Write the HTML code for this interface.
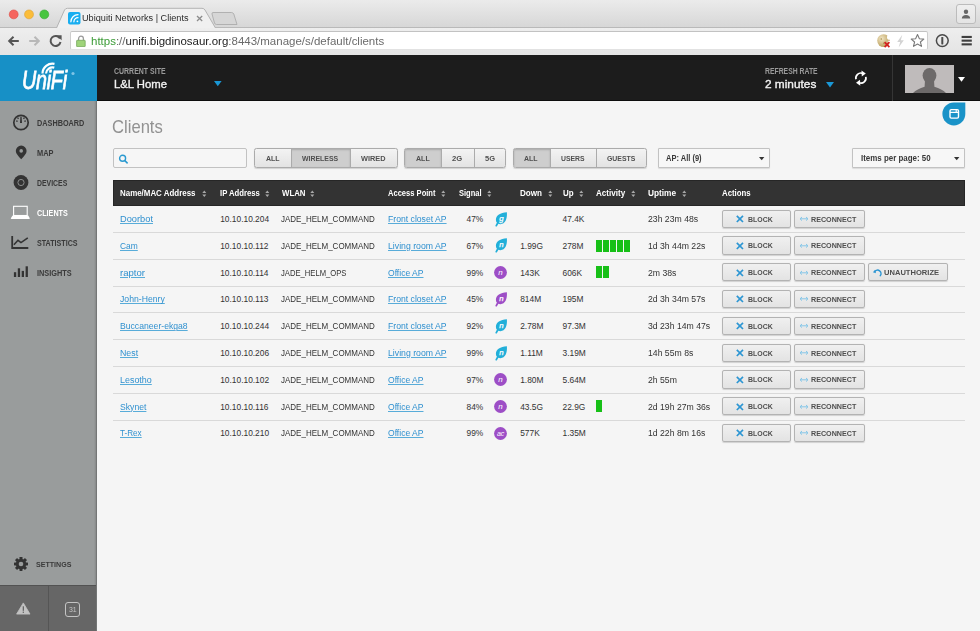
<!DOCTYPE html><html><head><meta charset="utf-8"><style>
html,body{margin:0;padding:0;width:980px;height:631px;overflow:hidden;background:#f5f5f5;}
body{position:relative;font-family:"Liberation Sans",sans-serif;}
.t{position:absolute;white-space:nowrap;line-height:1;transform-origin:0 0;}
.r{position:absolute;}
</style></head><body>
<div class="r" style="left:0px;top:0px;width:980px;height:27px;background:linear-gradient(#ebebeb,#d7d7d7);"></div>
<div class="r" style="left:0px;top:27px;width:980px;height:1px;background:#b9b9b9;"></div>
<div class="r" style="left:0px;top:28px;width:980px;height:27px;background:linear-gradient(#eeeeee,#e4e4e4);"></div>
<svg class="r" style="left:0;top:0" width="56" height="26"><circle cx="13.7" cy="14.4" r="4.45" fill="#f5655e" stroke="#dc4b45" stroke-width="0.6"/><circle cx="29" cy="14.4" r="4.45" fill="#fbbd3a" stroke="#dda02e" stroke-width="0.6"/><circle cx="44.3" cy="14.4" r="4.45" fill="#48c540" stroke="#33a62e" stroke-width="0.6"/></svg>
<svg class="r" style="left:0;top:0" width="260" height="28"><path d="M56.5 28 L64.5 10 Q65.5 8.3 67.5 8.3 L202 8.3 Q204 8.3 205 10 L215.5 28" fill="#f0f0f0" stroke="#b3b3b3" stroke-width="1"/><rect x="0" y="28" width="260" height="1" fill="#f0f0f0"/><path d="M213 12.5 L231.5 12.5 Q233 12.5 233.8 14 L237 24.5 L216.5 24.5 Q215 24.5 214.5 23 L212 14 Q211.8 12.5 213 12.5Z" fill="#d6d6d6" stroke="#a6a6a6" stroke-width="0.8"/></svg>
<svg class="r" style="left:68px;top:12px" width="13" height="13" viewBox="0 0 13 13"><rect x="0" y="0" width="12.5" height="12.5" rx="2" fill="#19aef0"/><g fill="none" stroke="#fff" stroke-width="1.25" stroke-linecap="round"><path d="M2.9 9.8 A7.1 7.1 0 0 1 10 2.7"/><path d="M5.9 9.8 A4.1 4.1 0 0 1 10 5.7"/></g><circle cx="9.4" cy="9.3" r="0.9" fill="#fff"/></svg>
<div class="t" style="left:82.20px;top:13.92px;font-size:9.08px;color:#2a2a2a;transform:scaleX(1.0068);">Ubiquiti Networks | Clients</div>
<svg class="r" style="left:196px;top:15px" width="8" height="7"><path d="M1 1 L6.2 6 M6.2 1 L1 6" stroke="#8c8c8c" stroke-width="1.3"/></svg>
<div class="r" style="left:956.3px;top:4.2px;width:19.5px;height:20px;border:1px solid #bcbcbc;border-radius:3px;box-sizing:border-box;background:linear-gradient(#efefef,#e4e4e4);"></div>
<svg class="r" style="left:959px;top:7px" width="14" height="14"><circle cx="7" cy="4.8" r="2.2" fill="#666"/><path d="M2.8 11.5 Q3 8 7 8 Q11 8 11.2 11.5Z" fill="#666"/></svg>
<svg class="r" style="left:0;top:27px" width="70" height="27"><g fill="none" stroke-width="2" stroke-linecap="butt"><path d="M18.8 14 H9.5 M13.5 9.8 L9.2 14 L13.5 18.2" stroke="#555"/><path d="M29.2 14 H38.5 M34.5 9.8 L38.8 14 L34.5 18.2" stroke="#b8b8b8"/><path d="M60 11.5 A5 5 0 1 0 60.5 15" stroke="#555"/></g><path d="M56.5 8.2 L61.6 8.2 L61.6 13.3Z" fill="#555"/></svg>
<div class="r" style="left:70px;top:30.6px;width:857.5px;height:19.8px;background:#fff;border:1px solid #cdcdcd;border-top-color:#c2c2c2;border-bottom-color:#e2e2e2;border-radius:2px;box-sizing:border-box;"></div>
<svg class="r" style="left:76px;top:35px" width="10" height="12"><path d="M2.6 5.5 V3.6 A2.4 2.4 0 0 1 7.4 3.6 V5.5" fill="none" stroke="#9a9a9a" stroke-width="1.3"/><rect x="0.6" y="5.3" width="8.6" height="6.4" rx="0.6" fill="#9fd47a" stroke="#6b9f52" stroke-width="0.7"/></svg>
<div class="t" style="left:91.4px;top:35.5px;font-size:11.2px;color:#6a6a6a;transform:scaleX(1.027);transform-origin:0 0;white-space:nowrap;"><span style="color:#3a9b35">https</span>://<span style="color:#222">unifi.bigdinosaur.org</span>:8443/manage/s/default/clients</div>
<svg class="r" style="left:876px;top:33px" width="104" height="16"><defs><radialGradient id="ck" cx="0.35" cy="0.35" r="0.7"><stop offset="0" stop-color="#f1e6c6"/><stop offset="1" stop-color="#b99b55"/></radialGradient><mask id="bite"><rect width="20" height="16" fill="#fff"/><circle cx="13.6" cy="4.2" r="2.6" fill="#000"/><circle cx="13.2" cy="9" r="1.6" fill="#000"/></mask></defs><circle cx="7.6" cy="7.6" r="6.4" fill="url(#ck)" mask="url(#bite)"/><circle cx="5.3" cy="6" r="0.8" fill="#a58a4a"/><circle cx="7.8" cy="10.2" r="0.7" fill="#a58a4a"/><path d="M8.6 9.2 L13.4 14.2 M13.4 9.2 L8.6 14.2" stroke="#d42020" stroke-width="1.7"/><path d="M26.3 1.8 L21.2 9 L24.2 9 L22.6 14.6 L27.8 7.2 L24.8 7.2 Z" fill="#d3d3d3"/><path d="M41.5 1.6 L43.4 5.7 L47.8 6.1 L44.4 9.0 L45.5 13.4 L41.5 11.0 L37.5 13.4 L38.6 9.0 L35.2 6.1 L39.6 5.7Z" fill="#fff" stroke="#7a7a7a" stroke-width="1.1" stroke-linejoin="round"/><circle cx="66.3" cy="7.6" r="5.9" fill="none" stroke="#4a4a4a" stroke-width="1.5"/><rect x="65.3" y="4" width="2" height="7.4" rx="0.6" fill="#4a4a4a"/><rect x="85.6" y="2.9" width="10.2" height="2.1" fill="#3f3f3f"/><rect x="85.6" y="6.6" width="10.2" height="2.1" fill="#3f3f3f"/><rect x="85.6" y="10.3" width="10.2" height="2.1" fill="#3f3f3f"/></svg>
<div class="r" style="left:0px;top:55px;width:97px;height:46px;background:#1790c6;"></div>
<div class="r" style="left:97px;top:55px;width:883px;height:46px;background:#1c1c1c;"></div>
<div class="r" style="left:97px;top:100px;width:883px;height:1px;background:#0d0d0d;"></div>
<div class="r" style="left:892px;top:55px;width:1px;height:46px;background:#353535;"></div>
<div class="t" style="left:21.50px;top:68.36px;font-size:24.86px;color:#fff;transform:scaleX(0.7929);font-style:italic;-webkit-text-stroke:0.8px #fff;letter-spacing:-0.3px;">UniFi</div>
<svg class="r" style="left:36px;top:60px" width="45" height="20"><g fill="none" stroke="#fff" stroke-width="2.2"><path d="M6.5 13.5 A10 10 0 0 1 18.5 3.8"/><path d="M10 13.5 A6.5 6.5 0 0 1 18.3 7.6"/></g><circle cx="37" cy="13.5" r="1.6" fill="#7fc4e6"/></svg>
<div class="t" style="left:114.40px;top:66.59px;font-size:8.52px;color:#9a9a9a;font-weight:bold;transform:scaleX(0.8197);">CURRENT SITE</div>
<div class="t" style="left:114.20px;top:78.82px;font-size:11.31px;color:#f2f2f2;-webkit-text-stroke:0.35px #f2f2f2;transform:scaleX(1.0013);">L&amp;L Home</div>
<svg class="r" style="left:213.8px;top:81.3px" width="9" height="6"><path d="M0 0 H7.6 L3.8 5.2Z" fill="#1a97d5"/></svg>
<div class="t" style="left:765.30px;top:66.59px;font-size:8.52px;color:#9a9a9a;font-weight:bold;transform:scaleX(0.8029);">REFRESH RATE</div>
<div class="t" style="left:765.00px;top:78.62px;font-size:11.31px;color:#f2f2f2;-webkit-text-stroke:0.35px #f2f2f2;transform:scaleX(1.0480);">2 minutes</div>
<svg class="r" style="left:826px;top:82px" width="9" height="6"><path d="M0 0 H8 L4 5.4Z" fill="#1a97d5"/></svg>
<svg class="r" style="left:853px;top:70px" width="16" height="17"><g transform="translate(7.9 8.1)" fill="#fff"><g id="ra"><path d="M-4.9 1.2 A5 5 0 0 1 1.8 -4.7" fill="none" stroke="#fff" stroke-width="1.7"/><path d="M0.6 -7.6 L4.9 -4.6 L0.9 -1.7Z"/></g><g transform="rotate(180)"><path d="M-4.9 1.2 A5 5 0 0 1 1.8 -4.7" fill="none" stroke="#fff" stroke-width="1.7"/><path d="M0.6 -7.6 L4.9 -4.6 L0.9 -1.7Z"/></g></g></svg>
<svg class="r" style="left:905px;top:65px" width="49" height="28"><rect width="49" height="28" fill="#bfbbbb"/><ellipse cx="24.5" cy="10.6" rx="6.9" ry="7.6" fill="#6d6a6a"/><path d="M8 28 Q12 24 19.6 21.8 L20 15 H29 L29.4 21.8 Q37 24 41 28Z" fill="#6d6a6a"/></svg>
<svg class="r" style="left:958px;top:76.5px" width="8" height="6"><path d="M0 0 H7 L3.5 4.8Z" fill="#fff"/></svg>
<div class="r" style="left:0px;top:101px;width:97px;height:530px;background:#999c9c;"></div>
<div class="r" style="left:94px;top:101px;width:2px;height:484px;background:linear-gradient(90deg,#999c9c,#868888);"></div>
<div class="r" style="left:96px;top:101px;width:1px;height:530px;background:#747676;"></div>
<div class="r" style="left:0px;top:585px;width:96px;height:46px;background:#666;"></div>
<div class="r" style="left:0px;top:585px;width:96px;height:1px;background:#525252;"></div>
<div class="r" style="left:48px;top:586px;width:1px;height:45px;background:#555;"></div>
<div class="t" style="left:36.60px;top:119.92px;font-size:8.24px;color:#3a3a3a;font-weight:bold;transform:scaleX(0.8850);">DASHBOARD</div>
<div class="t" style="left:36.60px;top:150.22px;font-size:8.24px;color:#3a3a3a;font-weight:bold;transform:scaleX(0.9011);">MAP</div>
<div class="t" style="left:36.60px;top:179.82px;font-size:8.24px;color:#3a3a3a;font-weight:bold;transform:scaleX(0.8376);">DEVICES</div>
<div class="t" style="left:36.60px;top:209.52px;font-size:8.24px;color:#fff;font-weight:bold;transform:scaleX(0.8737);">CLIENTS</div>
<div class="t" style="left:36.60px;top:239.52px;font-size:8.24px;color:#3a3a3a;font-weight:bold;transform:scaleX(0.8667);">STATISTICS</div>
<div class="t" style="left:36.60px;top:269.52px;font-size:8.24px;color:#3a3a3a;font-weight:bold;transform:scaleX(0.8917);">INSIGHTS</div>
<div class="t" style="left:36.20px;top:560.58px;font-size:7.82px;color:#3a3a3a;font-weight:bold;transform:scaleX(0.9077);">SETTINGS</div>
<svg class="r" style="left:0;top:101px" width="40" height="190"><circle cx="21" cy="21.5" r="7.2" fill="none" stroke="#333" stroke-width="1.7"/><path d="M20 22 L20.4 15.8 H21.6 L22 22Z" fill="#333"/><g stroke="#333" stroke-width="1.3"><path d="M16.2 19.8 L17.6 20.3"/><path d="M25.8 19.8 L24.4 20.3"/><path d="M17.6 16.6 L18.5 17.8"/><path d="M24.4 16.6 L23.5 17.8"/></g><path d="M21.2 58.3 C18.2 54.8 15.8 52.6 15.8 50 A5.4 5.4 0 0 1 26.6 50 C26.6 52.6 24.2 54.8 21.2 58.3Z" fill="#333"/><circle cx="21.2" cy="49.9" r="1.8" fill="#999c9c"/><circle cx="21" cy="81.5" r="7.4" fill="#333"/><circle cx="21" cy="81.5" r="3.1" fill="none" stroke="#8a8c8c" stroke-width="1.0"/><rect x="13.6" y="105.3" width="13.6" height="9.2" fill="none" stroke="#fff" stroke-width="1.1"/><path d="M12.6 114.6 H28.2 L29.8 117.2 Q29.8 118 29 118 H11.6 Q10.8 118 10.8 117.2Z" fill="#fff"/><path d="M12.2 135 V147 H28.3" fill="none" stroke="#333" stroke-width="1.8"/><path d="M13.9 143.8 L18 139.3 L21 141.6 L27.8 136.8" fill="none" stroke="#333" stroke-width="1.6"/><rect x="13.9" y="171.2" width="2.3" height="4.8" fill="#333"/><rect x="17.8" y="167.3" width="2.3" height="8.7" fill="#333"/><rect x="21.7" y="169.9" width="2.3" height="6.1" fill="#333"/><rect x="25.6" y="165.3" width="2.3" height="10.7" fill="#333"/></svg>
<svg class="r" style="left:14.3px;top:556.7px" width="14" height="14" viewBox="-7 -7 14 14"><g fill="#333"><rect x="-1.5" y="-7.0" width="3.0" height="2.8" rx="0.4" transform="rotate(0)"/><rect x="-1.5" y="-7.0" width="3.0" height="2.8" rx="0.4" transform="rotate(45)"/><rect x="-1.5" y="-7.0" width="3.0" height="2.8" rx="0.4" transform="rotate(90)"/><rect x="-1.5" y="-7.0" width="3.0" height="2.8" rx="0.4" transform="rotate(135)"/><rect x="-1.5" y="-7.0" width="3.0" height="2.8" rx="0.4" transform="rotate(180)"/><rect x="-1.5" y="-7.0" width="3.0" height="2.8" rx="0.4" transform="rotate(225)"/><rect x="-1.5" y="-7.0" width="3.0" height="2.8" rx="0.4" transform="rotate(270)"/><rect x="-1.5" y="-7.0" width="3.0" height="2.8" rx="0.4" transform="rotate(315)"/><circle r="5.2"/></g><circle r="2.3" fill="#999c9c"/></svg>
<svg class="r" style="left:16px;top:602px" width="15" height="13"><path d="M7.3 0.9 L14.0 12.1 H0.6Z" fill="#c2c2c2" stroke="#c2c2c2" stroke-width="0.8" stroke-linejoin="round"/><rect x="6.7" y="4.3" width="1.3" height="4.5" fill="#666"/><rect x="6.7" y="9.6" width="1.3" height="1.3" fill="#666"/></svg>
<div class="r" style="left:65.3px;top:601.8px;width:14.8px;height:14.8px;border:1.7px solid #c4c4c4;border-radius:3px;box-sizing:border-box;"></div>
<div class="t" style="left:69.10px;top:605.58px;font-size:7.82px;color:#c4c4c4;transform:scaleX(0.8851);">31</div>
<div class="r" style="left:97px;top:101px;width:883px;height:530px;background:#f5f5f5;"></div>
<div class="t" style="left:111.90px;top:117.83px;font-size:18.16px;color:#929292;transform:scaleX(0.9153);">Clients</div>
<div class="r" style="left:112.5px;top:148.3px;width:134.3px;height:20px;border:1px solid #c2c2c2;border-radius:2px;box-sizing:border-box;background:#f6f6f6;"></div>
<svg class="r" style="left:117.5px;top:153.8px" width="12" height="10"><circle cx="4.6" cy="4.3" r="3" fill="none" stroke="#2a9ad0" stroke-width="1.4"/><path d="M6.6 6.4 L9.6 9.3" stroke="#2a9ad0" stroke-width="1.6"/></svg>
<div class="r" style="left:254px;top:148px;width:143.5px;height:20.3px;border:1px solid #ababab;border-radius:2.5px;box-sizing:border-box;background:linear-gradient(#f3f3f3,#e3e3e3);box-shadow:0 0.5px 1px rgba(0,0,0,0.15);overflow:hidden;"></div>
<div class="t" style="left:265.80px;top:154.88px;font-size:7.82px;color:#4f4f4f;font-weight:bold;transform:scaleX(0.8945);">ALL</div>
<div class="r" style="left:290.5px;top:149px;width:59.0px;height:18.3px;background:#cecece;box-shadow:inset 0 1px 2px rgba(0,0,0,0.18);"></div>
<div class="t" style="left:302.00px;top:154.88px;font-size:7.82px;color:#4f4f4f;font-weight:bold;transform:scaleX(0.8862);">WIRELESS</div>
<div class="t" style="left:361.00px;top:154.88px;font-size:7.82px;color:#4f4f4f;font-weight:bold;transform:scaleX(0.9398);">WIRED</div>
<div class="r" style="left:290.5px;top:149px;width:1px;height:18.3px;background:#ababab;"></div>
<div class="r" style="left:349.5px;top:149px;width:1px;height:18.3px;background:#ababab;"></div>
<div class="r" style="left:404.3px;top:148px;width:101.5px;height:20.3px;border:1px solid #ababab;border-radius:2.5px;box-sizing:border-box;background:linear-gradient(#f3f3f3,#e3e3e3);box-shadow:0 0.5px 1px rgba(0,0,0,0.15);overflow:hidden;"></div>
<div class="r" style="left:405.3px;top:149px;width:35.69999999999999px;height:18.3px;background:#cecece;box-shadow:inset 0 1px 2px rgba(0,0,0,0.18);"></div>
<div class="t" style="left:415.70px;top:154.88px;font-size:7.82px;color:#4f4f4f;font-weight:bold;transform:scaleX(0.9011);">ALL</div>
<div class="t" style="left:452.00px;top:154.88px;font-size:7.82px;color:#4f4f4f;font-weight:bold;transform:scaleX(0.9776);">2G</div>
<div class="t" style="left:484.50px;top:154.88px;font-size:7.82px;color:#4f4f4f;font-weight:bold;transform:scaleX(0.9585);">5G</div>
<div class="r" style="left:441px;top:149px;width:1px;height:18.3px;background:#ababab;"></div>
<div class="r" style="left:473.5px;top:149px;width:1px;height:18.3px;background:#ababab;"></div>
<div class="r" style="left:513.2px;top:148px;width:133.5999999999999px;height:20.3px;border:1px solid #ababab;border-radius:2.5px;box-sizing:border-box;background:linear-gradient(#f3f3f3,#e3e3e3);box-shadow:0 0.5px 1px rgba(0,0,0,0.15);overflow:hidden;"></div>
<div class="r" style="left:514.2px;top:149px;width:35.39999999999998px;height:18.3px;background:#cecece;box-shadow:inset 0 1px 2px rgba(0,0,0,0.18);"></div>
<div class="t" style="left:524.30px;top:154.88px;font-size:7.82px;color:#4f4f4f;font-weight:bold;transform:scaleX(0.8945);">ALL</div>
<div class="t" style="left:560.70px;top:154.88px;font-size:7.82px;color:#4f4f4f;font-weight:bold;transform:scaleX(0.8758);">USERS</div>
<div class="t" style="left:607.00px;top:154.88px;font-size:7.82px;color:#4f4f4f;font-weight:bold;transform:scaleX(0.8800);">GUESTS</div>
<div class="r" style="left:549.6px;top:149px;width:1px;height:18.3px;background:#ababab;"></div>
<div class="r" style="left:595.5px;top:149px;width:1px;height:18.3px;background:#ababab;"></div>
<div class="r" style="left:657.9px;top:148.4px;width:112.1px;height:20px;border:1px solid #c2c2c2;border-radius:1px;box-sizing:border-box;background:#f7f7f7;box-shadow:0 0.5px 1px rgba(0,0,0,0.1);"></div>
<div class="t" style="left:666.10px;top:154.62px;font-size:8.24px;color:#383838;font-weight:bold;transform:scaleX(0.9113);">AP: All (9)</div>
<svg class="r" style="left:759px;top:157px" width="6" height="4"><path d="M0 0 H5.4 L2.7 3.2Z" fill="#333"/></svg>
<div class="r" style="left:852.4px;top:148.4px;width:112.3px;height:20px;border:1px solid #c2c2c2;border-radius:1px;box-sizing:border-box;background:#f7f7f7;box-shadow:0 0.5px 1px rgba(0,0,0,0.1);"></div>
<div class="t" style="left:860.60px;top:154.62px;font-size:8.24px;color:#383838;font-weight:bold;transform:scaleX(0.9632);">Items per page: 50</div>
<svg class="r" style="left:953.6px;top:157px" width="6" height="4"><path d="M0 0 H5.4 L2.7 3.2Z" fill="#333"/></svg>
<svg class="r" style="left:942px;top:102px" width="24" height="24"><g transform="translate(0.4 0.5)"><path d="M11.45 0 H22.9 V11.45 A11.45 11.45 0 1 1 11.45 0Z" fill="#1a93c8"/><rect x="7.6" y="7.1" width="8.5" height="8.5" rx="1.3" fill="none" stroke="#fff" stroke-width="1.4"/><path d="M7.6 9.9 H16.1 M13.8 7.1 V9.9" stroke="#fff" stroke-width="1.1"/></g></svg>
<div class="r" style="left:112.5px;top:180px;width:852.5px;height:26px;background:#333;box-shadow:inset 0 0 0 1px #262626;"></div>
<div class="t" style="left:120.30px;top:188.95px;font-size:8.80px;color:#fff;font-weight:bold;transform:scaleX(0.9012);">Name/MAC Address</div>
<svg class="r" style="left:201.5px;top:190px" width="5" height="8"><path d="M0.3 3.1 L2.3 0.6 L4.3 3.1Z M0.3 4.6 L2.3 7.1 L4.3 4.6Z" fill="#a8a8a8"/></svg>
<div class="t" style="left:219.70px;top:188.95px;font-size:8.80px;color:#fff;font-weight:bold;transform:scaleX(0.8751);">IP Address</div>
<svg class="r" style="left:265.2px;top:190px" width="5" height="8"><path d="M0.3 3.1 L2.3 0.6 L4.3 3.1Z M0.3 4.6 L2.3 7.1 L4.3 4.6Z" fill="#a8a8a8"/></svg>
<div class="t" style="left:281.50px;top:188.95px;font-size:8.80px;color:#fff;font-weight:bold;transform:scaleX(0.8906);">WLAN</div>
<svg class="r" style="left:310.4px;top:190px" width="5" height="8"><path d="M0.3 3.1 L2.3 0.6 L4.3 3.1Z M0.3 4.6 L2.3 7.1 L4.3 4.6Z" fill="#a8a8a8"/></svg>
<div class="t" style="left:388.30px;top:188.95px;font-size:8.80px;color:#fff;font-weight:bold;transform:scaleX(0.8596);">Access Point</div>
<svg class="r" style="left:441.0px;top:190px" width="5" height="8"><path d="M0.3 3.1 L2.3 0.6 L4.3 3.1Z M0.3 4.6 L2.3 7.1 L4.3 4.6Z" fill="#a8a8a8"/></svg>
<div class="t" style="left:458.60px;top:188.95px;font-size:8.80px;color:#fff;font-weight:bold;transform:scaleX(0.8522);">Signal</div>
<svg class="r" style="left:486.7px;top:190px" width="5" height="8"><path d="M0.3 3.1 L2.3 0.6 L4.3 3.1Z M0.3 4.6 L2.3 7.1 L4.3 4.6Z" fill="#a8a8a8"/></svg>
<div class="t" style="left:519.90px;top:188.95px;font-size:8.80px;color:#fff;font-weight:bold;transform:scaleX(0.9187);">Down</div>
<svg class="r" style="left:547.8px;top:190px" width="5" height="8"><path d="M0.3 3.1 L2.3 0.6 L4.3 3.1Z M0.3 4.6 L2.3 7.1 L4.3 4.6Z" fill="#a8a8a8"/></svg>
<div class="t" style="left:562.90px;top:188.95px;font-size:8.80px;color:#fff;font-weight:bold;transform:scaleX(0.9037);">Up</div>
<svg class="r" style="left:579.0px;top:190px" width="5" height="8"><path d="M0.3 3.1 L2.3 0.6 L4.3 3.1Z M0.3 4.6 L2.3 7.1 L4.3 4.6Z" fill="#a8a8a8"/></svg>
<div class="t" style="left:596.30px;top:188.95px;font-size:8.80px;color:#fff;font-weight:bold;transform:scaleX(0.9187);">Activity</div>
<svg class="r" style="left:631.3px;top:190px" width="5" height="8"><path d="M0.3 3.1 L2.3 0.6 L4.3 3.1Z M0.3 4.6 L2.3 7.1 L4.3 4.6Z" fill="#a8a8a8"/></svg>
<div class="t" style="left:647.80px;top:188.95px;font-size:8.80px;color:#fff;font-weight:bold;transform:scaleX(0.9423);">Uptime</div>
<svg class="r" style="left:681.7px;top:190px" width="5" height="8"><path d="M0.3 3.1 L2.3 0.6 L4.3 3.1Z M0.3 4.6 L2.3 7.1 L4.3 4.6Z" fill="#a8a8a8"/></svg>
<div class="t" style="left:722.00px;top:188.95px;font-size:8.80px;color:#fff;font-weight:bold;transform:scaleX(0.8895);">Actions</div>
<div class="r" style="left:112.5px;top:232px;width:852.5px;height:1px;background:#d9d9d9;"></div>
<div class="t" style="left:119.80px;top:214.91px;font-size:8.38px;color:#2f90cf;transform:scaleX(1.1069);text-decoration:underline;text-underline-offset:1px;text-decoration-color:#58acd9;">Doorbot</div>
<div class="t" style="left:220.20px;top:214.91px;font-size:8.38px;color:#333;">10.10.10.204</div>
<div class="t" style="left:281.30px;top:214.91px;font-size:8.38px;color:#333;transform:scaleX(0.9557);">JADE_HELM_COMMAND</div>
<div class="t" style="left:388.00px;top:214.91px;font-size:8.38px;color:#2f90cf;transform:scaleX(1.0313);text-decoration:underline;text-underline-offset:1px;text-decoration-color:#58acd9;">Front closet AP</div>
<div class="t" style="left:466.50px;top:214.91px;font-size:8.38px;color:#333;">47%</div>
<svg class="r" style="left:494.5px;top:211.5px" width="13" height="15"><path d="M11.9 0.3 C12.4 7 10.2 12 5.5 12.2 C2.5 12.3 0.8 10.3 0.9 7.8 C1 3.5 5.2 0.8 11.9 0.3Z" fill="#22afd9"/><path d="M2.9 10.8 L1.3 13.6" stroke="#22afd9" stroke-width="1.8" stroke-linecap="round"/><text x="6.4" y="9.2" font-family="Liberation Sans" font-style="italic" font-size="7.8" stroke="#fff" stroke-width="0.25" fill="#fff" text-anchor="middle">g</text></svg>
<div class="t" style="left:562.50px;top:214.91px;font-size:8.38px;color:#333;">47.4K</div>
<div class="t" style="left:647.70px;top:214.91px;font-size:8.38px;color:#333;transform:scaleX(1.0350);">23h 23m 48s</div>
<div class="r" style="left:722px;top:209.6px;width:69.0px;height:18.2px;border:1px solid #b3b3b3;border-radius:2px;box-sizing:border-box;background:linear-gradient(#f0f0f0,#e3e3e3);box-shadow:0 0.5px 1px rgba(0,0,0,0.15);"></div>
<svg class="r" style="left:735.8px;top:215.0px" width="8" height="8"><path d="M0.8 0.8 L7 7 M7 0.8 L0.8 7" stroke="#2d96d3" stroke-width="1.7"/></svg>
<div class="t" style="left:748.20px;top:215.58px;font-size:7.82px;color:#4f4f4f;font-weight:bold;transform:scaleX(0.8919);">BLOCK</div>
<div class="r" style="left:794px;top:209.6px;width:71.0px;height:18.2px;border:1px solid #b3b3b3;border-radius:2px;box-sizing:border-box;background:linear-gradient(#f0f0f0,#e3e3e3);box-shadow:0 0.5px 1px rgba(0,0,0,0.15);"></div>
<svg class="r" style="left:798.5px;top:216.0px" width="10" height="6"><path d="M1.5 2.8 H8.5 M3 1 L1 2.8 L3 4.6 M7 1 L9 2.8 L7 4.6" fill="none" stroke="#7cc3e8" stroke-width="0.9"/></svg>
<div class="t" style="left:810.50px;top:215.58px;font-size:7.82px;color:#4f4f4f;font-weight:bold;transform:scaleX(0.9165);">RECONNECT</div>
<div class="r" style="left:112.5px;top:259px;width:852.5px;height:1px;background:#d9d9d9;"></div>
<div class="t" style="left:119.80px;top:241.71px;font-size:8.38px;color:#2f90cf;transform:scaleX(1.0061);text-decoration:underline;text-underline-offset:1px;text-decoration-color:#58acd9;">Cam</div>
<div class="t" style="left:220.20px;top:241.71px;font-size:8.38px;color:#333;">10.10.10.112</div>
<div class="t" style="left:281.30px;top:241.71px;font-size:8.38px;color:#333;transform:scaleX(0.9557);">JADE_HELM_COMMAND</div>
<div class="t" style="left:388.00px;top:241.71px;font-size:8.38px;color:#2f90cf;transform:scaleX(1.0397);text-decoration:underline;text-underline-offset:1px;text-decoration-color:#58acd9;">Living room AP</div>
<div class="t" style="left:466.50px;top:241.71px;font-size:8.38px;color:#333;">67%</div>
<svg class="r" style="left:494.5px;top:238.3px" width="13" height="15"><path d="M11.9 0.3 C12.4 7 10.2 12 5.5 12.2 C2.5 12.3 0.8 10.3 0.9 7.8 C1 3.5 5.2 0.8 11.9 0.3Z" fill="#22afd9"/><path d="M2.9 10.8 L1.3 13.6" stroke="#22afd9" stroke-width="1.8" stroke-linecap="round"/><text x="6.4" y="9.2" font-family="Liberation Sans" font-style="italic" font-size="7.8" stroke="#fff" stroke-width="0.25" fill="#fff" text-anchor="middle">n</text></svg>
<div class="t" style="left:520.20px;top:241.71px;font-size:8.38px;color:#333;">1.99G</div>
<div class="t" style="left:562.50px;top:241.71px;font-size:8.38px;color:#333;">278M</div>
<div class="r" style="left:596.2px;top:239.5px;width:6px;height:12px;background:#17c017;"></div>
<div class="r" style="left:603.2px;top:239.5px;width:6px;height:12px;background:#17c017;"></div>
<div class="r" style="left:610.2px;top:239.5px;width:6px;height:12px;background:#17c017;"></div>
<div class="r" style="left:617.2px;top:239.5px;width:6px;height:12px;background:#17c017;"></div>
<div class="r" style="left:624.2px;top:239.5px;width:6px;height:12px;background:#17c017;"></div>
<div class="t" style="left:647.70px;top:241.71px;font-size:8.38px;color:#333;transform:scaleX(1.0350);">1d 3h 44m 22s</div>
<div class="r" style="left:722px;top:236.4px;width:69.0px;height:18.2px;border:1px solid #b3b3b3;border-radius:2px;box-sizing:border-box;background:linear-gradient(#f0f0f0,#e3e3e3);box-shadow:0 0.5px 1px rgba(0,0,0,0.15);"></div>
<svg class="r" style="left:735.8px;top:241.8px" width="8" height="8"><path d="M0.8 0.8 L7 7 M7 0.8 L0.8 7" stroke="#2d96d3" stroke-width="1.7"/></svg>
<div class="t" style="left:748.20px;top:242.38px;font-size:7.82px;color:#4f4f4f;font-weight:bold;transform:scaleX(0.8919);">BLOCK</div>
<div class="r" style="left:794px;top:236.4px;width:71.0px;height:18.2px;border:1px solid #b3b3b3;border-radius:2px;box-sizing:border-box;background:linear-gradient(#f0f0f0,#e3e3e3);box-shadow:0 0.5px 1px rgba(0,0,0,0.15);"></div>
<svg class="r" style="left:798.5px;top:242.8px" width="10" height="6"><path d="M1.5 2.8 H8.5 M3 1 L1 2.8 L3 4.6 M7 1 L9 2.8 L7 4.6" fill="none" stroke="#7cc3e8" stroke-width="0.9"/></svg>
<div class="t" style="left:810.50px;top:242.38px;font-size:7.82px;color:#4f4f4f;font-weight:bold;transform:scaleX(0.9165);">RECONNECT</div>
<div class="r" style="left:112.5px;top:286px;width:852.5px;height:1px;background:#d9d9d9;"></div>
<div class="t" style="left:119.80px;top:268.51px;font-size:8.38px;color:#2f90cf;transform:scaleX(1.1420);text-decoration:underline;text-underline-offset:1px;text-decoration-color:#58acd9;">raptor</div>
<div class="t" style="left:220.20px;top:268.51px;font-size:8.38px;color:#333;">10.10.10.114</div>
<div class="t" style="left:281.30px;top:268.51px;font-size:8.38px;color:#333;transform:scaleX(0.9133);">JADE_HELM_OPS</div>
<div class="t" style="left:388.00px;top:268.51px;font-size:8.38px;color:#2f90cf;transform:scaleX(1.0207);text-decoration:underline;text-underline-offset:1px;text-decoration-color:#58acd9;">Office AP</div>
<div class="t" style="left:466.50px;top:268.51px;font-size:8.38px;color:#333;">99%</div>
<svg class="r" style="left:494px;top:265.9px" width="13" height="13"><circle cx="6.5" cy="6.5" r="6.4" fill="#9d4ec6"/><text x="6.6" y="9.3" font-family="Liberation Sans" font-style="italic" font-size="8" fill="#fff" text-anchor="middle">n</text></svg>
<div class="t" style="left:520.20px;top:268.51px;font-size:8.38px;color:#333;">143K</div>
<div class="t" style="left:562.50px;top:268.51px;font-size:8.38px;color:#333;">606K</div>
<div class="r" style="left:596.2px;top:266.3px;width:6px;height:12px;background:#17c017;"></div>
<div class="r" style="left:603.2px;top:266.3px;width:6px;height:12px;background:#17c017;"></div>
<div class="t" style="left:647.70px;top:268.51px;font-size:8.38px;color:#333;transform:scaleX(1.0350);">2m 38s</div>
<div class="r" style="left:722px;top:263.2px;width:69.0px;height:18.2px;border:1px solid #b3b3b3;border-radius:2px;box-sizing:border-box;background:linear-gradient(#f0f0f0,#e3e3e3);box-shadow:0 0.5px 1px rgba(0,0,0,0.15);"></div>
<svg class="r" style="left:735.8px;top:268.6px" width="8" height="8"><path d="M0.8 0.8 L7 7 M7 0.8 L0.8 7" stroke="#2d96d3" stroke-width="1.7"/></svg>
<div class="t" style="left:748.20px;top:269.18px;font-size:7.82px;color:#4f4f4f;font-weight:bold;transform:scaleX(0.8919);">BLOCK</div>
<div class="r" style="left:794px;top:263.2px;width:71.0px;height:18.2px;border:1px solid #b3b3b3;border-radius:2px;box-sizing:border-box;background:linear-gradient(#f0f0f0,#e3e3e3);box-shadow:0 0.5px 1px rgba(0,0,0,0.15);"></div>
<svg class="r" style="left:798.5px;top:269.6px" width="10" height="6"><path d="M1.5 2.8 H8.5 M3 1 L1 2.8 L3 4.6 M7 1 L9 2.8 L7 4.6" fill="none" stroke="#7cc3e8" stroke-width="0.9"/></svg>
<div class="t" style="left:810.50px;top:269.18px;font-size:7.82px;color:#4f4f4f;font-weight:bold;transform:scaleX(0.9165);">RECONNECT</div>
<div class="r" style="left:868px;top:263.2px;width:80.0px;height:18.2px;border:1px solid #b3b3b3;border-radius:2px;box-sizing:border-box;background:linear-gradient(#f0f0f0,#e3e3e3);box-shadow:0 0.5px 1px rgba(0,0,0,0.15);"></div>
<svg class="r" style="left:872px;top:267px" width="11" height="11"><path d="M2.8 4.5 A3.3 3.3 0 0 1 8.3 8.6" fill="none" stroke="#2d96d3" stroke-width="1.5" stroke-linecap="round"/><path d="M0.9 5.3 L3.0 2.9 L4.0 6.3Z" fill="#2d96d3"/></svg>
<div class="t" style="left:884.30px;top:269.18px;font-size:7.82px;color:#4f4f4f;font-weight:bold;transform:scaleX(0.9681);">UNAUTHORIZE</div>
<div class="r" style="left:112.5px;top:312px;width:852.5px;height:1px;background:#d9d9d9;"></div>
<div class="t" style="left:119.80px;top:295.31px;font-size:8.38px;color:#2f90cf;transform:scaleX(1.0343);text-decoration:underline;text-underline-offset:1px;text-decoration-color:#58acd9;">John-Henry</div>
<div class="t" style="left:220.20px;top:295.31px;font-size:8.38px;color:#333;">10.10.10.113</div>
<div class="t" style="left:281.30px;top:295.31px;font-size:8.38px;color:#333;transform:scaleX(0.9557);">JADE_HELM_COMMAND</div>
<div class="t" style="left:388.00px;top:295.31px;font-size:8.38px;color:#2f90cf;transform:scaleX(1.0313);text-decoration:underline;text-underline-offset:1px;text-decoration-color:#58acd9;">Front closet AP</div>
<div class="t" style="left:466.50px;top:295.31px;font-size:8.38px;color:#333;">45%</div>
<svg class="r" style="left:494.5px;top:291.9px" width="13" height="15"><path d="M11.9 0.3 C12.4 7 10.2 12 5.5 12.2 C2.5 12.3 0.8 10.3 0.9 7.8 C1 3.5 5.2 0.8 11.9 0.3Z" fill="#9d4ec6"/><path d="M2.9 10.8 L1.3 13.6" stroke="#9d4ec6" stroke-width="1.8" stroke-linecap="round"/><text x="6.4" y="9.2" font-family="Liberation Sans" font-style="italic" font-size="7.8" stroke="#fff" stroke-width="0.25" fill="#fff" text-anchor="middle">n</text></svg>
<div class="t" style="left:520.20px;top:295.31px;font-size:8.38px;color:#333;">814M</div>
<div class="t" style="left:562.50px;top:295.31px;font-size:8.38px;color:#333;">195M</div>
<div class="t" style="left:647.70px;top:295.31px;font-size:8.38px;color:#333;transform:scaleX(1.0350);">2d 3h 34m 57s</div>
<div class="r" style="left:722px;top:290.0px;width:69.0px;height:18.2px;border:1px solid #b3b3b3;border-radius:2px;box-sizing:border-box;background:linear-gradient(#f0f0f0,#e3e3e3);box-shadow:0 0.5px 1px rgba(0,0,0,0.15);"></div>
<svg class="r" style="left:735.8px;top:295.4px" width="8" height="8"><path d="M0.8 0.8 L7 7 M7 0.8 L0.8 7" stroke="#2d96d3" stroke-width="1.7"/></svg>
<div class="t" style="left:748.20px;top:295.98px;font-size:7.82px;color:#4f4f4f;font-weight:bold;transform:scaleX(0.8919);">BLOCK</div>
<div class="r" style="left:794px;top:290.0px;width:71.0px;height:18.2px;border:1px solid #b3b3b3;border-radius:2px;box-sizing:border-box;background:linear-gradient(#f0f0f0,#e3e3e3);box-shadow:0 0.5px 1px rgba(0,0,0,0.15);"></div>
<svg class="r" style="left:798.5px;top:296.4px" width="10" height="6"><path d="M1.5 2.8 H8.5 M3 1 L1 2.8 L3 4.6 M7 1 L9 2.8 L7 4.6" fill="none" stroke="#7cc3e8" stroke-width="0.9"/></svg>
<div class="t" style="left:810.50px;top:295.98px;font-size:7.82px;color:#4f4f4f;font-weight:bold;transform:scaleX(0.9165);">RECONNECT</div>
<div class="r" style="left:112.5px;top:339px;width:852.5px;height:1px;background:#d9d9d9;"></div>
<div class="t" style="left:119.80px;top:322.11px;font-size:8.38px;color:#2f90cf;transform:scaleX(1.0307);text-decoration:underline;text-underline-offset:1px;text-decoration-color:#58acd9;">Buccaneer-ekga8</div>
<div class="t" style="left:220.20px;top:322.11px;font-size:8.38px;color:#333;">10.10.10.244</div>
<div class="t" style="left:281.30px;top:322.11px;font-size:8.38px;color:#333;transform:scaleX(0.9557);">JADE_HELM_COMMAND</div>
<div class="t" style="left:388.00px;top:322.11px;font-size:8.38px;color:#2f90cf;transform:scaleX(1.0313);text-decoration:underline;text-underline-offset:1px;text-decoration-color:#58acd9;">Front closet AP</div>
<div class="t" style="left:466.50px;top:322.11px;font-size:8.38px;color:#333;">92%</div>
<svg class="r" style="left:494.5px;top:318.7px" width="13" height="15"><path d="M11.9 0.3 C12.4 7 10.2 12 5.5 12.2 C2.5 12.3 0.8 10.3 0.9 7.8 C1 3.5 5.2 0.8 11.9 0.3Z" fill="#22afd9"/><path d="M2.9 10.8 L1.3 13.6" stroke="#22afd9" stroke-width="1.8" stroke-linecap="round"/><text x="6.4" y="9.2" font-family="Liberation Sans" font-style="italic" font-size="7.8" stroke="#fff" stroke-width="0.25" fill="#fff" text-anchor="middle">n</text></svg>
<div class="t" style="left:520.20px;top:322.11px;font-size:8.38px;color:#333;">2.78M</div>
<div class="t" style="left:562.50px;top:322.11px;font-size:8.38px;color:#333;">97.3M</div>
<div class="t" style="left:647.70px;top:322.11px;font-size:8.38px;color:#333;transform:scaleX(1.0350);">3d 23h 14m 47s</div>
<div class="r" style="left:722px;top:316.8px;width:69.0px;height:18.2px;border:1px solid #b3b3b3;border-radius:2px;box-sizing:border-box;background:linear-gradient(#f0f0f0,#e3e3e3);box-shadow:0 0.5px 1px rgba(0,0,0,0.15);"></div>
<svg class="r" style="left:735.8px;top:322.2px" width="8" height="8"><path d="M0.8 0.8 L7 7 M7 0.8 L0.8 7" stroke="#2d96d3" stroke-width="1.7"/></svg>
<div class="t" style="left:748.20px;top:322.78px;font-size:7.82px;color:#4f4f4f;font-weight:bold;transform:scaleX(0.8919);">BLOCK</div>
<div class="r" style="left:794px;top:316.8px;width:71.0px;height:18.2px;border:1px solid #b3b3b3;border-radius:2px;box-sizing:border-box;background:linear-gradient(#f0f0f0,#e3e3e3);box-shadow:0 0.5px 1px rgba(0,0,0,0.15);"></div>
<svg class="r" style="left:798.5px;top:323.2px" width="10" height="6"><path d="M1.5 2.8 H8.5 M3 1 L1 2.8 L3 4.6 M7 1 L9 2.8 L7 4.6" fill="none" stroke="#7cc3e8" stroke-width="0.9"/></svg>
<div class="t" style="left:810.50px;top:322.78px;font-size:7.82px;color:#4f4f4f;font-weight:bold;transform:scaleX(0.9165);">RECONNECT</div>
<div class="r" style="left:112.5px;top:366px;width:852.5px;height:1px;background:#d9d9d9;"></div>
<div class="t" style="left:119.80px;top:348.91px;font-size:8.38px;color:#2f90cf;transform:scaleX(1.0505);text-decoration:underline;text-underline-offset:1px;text-decoration-color:#58acd9;">Nest</div>
<div class="t" style="left:220.20px;top:348.91px;font-size:8.38px;color:#333;">10.10.10.206</div>
<div class="t" style="left:281.30px;top:348.91px;font-size:8.38px;color:#333;transform:scaleX(0.9557);">JADE_HELM_COMMAND</div>
<div class="t" style="left:388.00px;top:348.91px;font-size:8.38px;color:#2f90cf;transform:scaleX(1.0397);text-decoration:underline;text-underline-offset:1px;text-decoration-color:#58acd9;">Living room AP</div>
<div class="t" style="left:466.50px;top:348.91px;font-size:8.38px;color:#333;">99%</div>
<svg class="r" style="left:494.5px;top:345.5px" width="13" height="15"><path d="M11.9 0.3 C12.4 7 10.2 12 5.5 12.2 C2.5 12.3 0.8 10.3 0.9 7.8 C1 3.5 5.2 0.8 11.9 0.3Z" fill="#22afd9"/><path d="M2.9 10.8 L1.3 13.6" stroke="#22afd9" stroke-width="1.8" stroke-linecap="round"/><text x="6.4" y="9.2" font-family="Liberation Sans" font-style="italic" font-size="7.8" stroke="#fff" stroke-width="0.25" fill="#fff" text-anchor="middle">n</text></svg>
<div class="t" style="left:520.20px;top:348.91px;font-size:8.38px;color:#333;">1.11M</div>
<div class="t" style="left:562.50px;top:348.91px;font-size:8.38px;color:#333;">3.19M</div>
<div class="t" style="left:647.70px;top:348.91px;font-size:8.38px;color:#333;transform:scaleX(1.0350);">14h 55m 8s</div>
<div class="r" style="left:722px;top:343.6px;width:69.0px;height:18.2px;border:1px solid #b3b3b3;border-radius:2px;box-sizing:border-box;background:linear-gradient(#f0f0f0,#e3e3e3);box-shadow:0 0.5px 1px rgba(0,0,0,0.15);"></div>
<svg class="r" style="left:735.8px;top:349.0px" width="8" height="8"><path d="M0.8 0.8 L7 7 M7 0.8 L0.8 7" stroke="#2d96d3" stroke-width="1.7"/></svg>
<div class="t" style="left:748.20px;top:349.58px;font-size:7.82px;color:#4f4f4f;font-weight:bold;transform:scaleX(0.8919);">BLOCK</div>
<div class="r" style="left:794px;top:343.6px;width:71.0px;height:18.2px;border:1px solid #b3b3b3;border-radius:2px;box-sizing:border-box;background:linear-gradient(#f0f0f0,#e3e3e3);box-shadow:0 0.5px 1px rgba(0,0,0,0.15);"></div>
<svg class="r" style="left:798.5px;top:350.0px" width="10" height="6"><path d="M1.5 2.8 H8.5 M3 1 L1 2.8 L3 4.6 M7 1 L9 2.8 L7 4.6" fill="none" stroke="#7cc3e8" stroke-width="0.9"/></svg>
<div class="t" style="left:810.50px;top:349.58px;font-size:7.82px;color:#4f4f4f;font-weight:bold;transform:scaleX(0.9165);">RECONNECT</div>
<div class="r" style="left:112.5px;top:393px;width:852.5px;height:1px;background:#d9d9d9;"></div>
<div class="t" style="left:119.80px;top:375.71px;font-size:8.38px;color:#2f90cf;transform:scaleX(1.0664);text-decoration:underline;text-underline-offset:1px;text-decoration-color:#58acd9;">Lesotho</div>
<div class="t" style="left:220.20px;top:375.71px;font-size:8.38px;color:#333;">10.10.10.102</div>
<div class="t" style="left:281.30px;top:375.71px;font-size:8.38px;color:#333;transform:scaleX(0.9557);">JADE_HELM_COMMAND</div>
<div class="t" style="left:388.00px;top:375.71px;font-size:8.38px;color:#2f90cf;transform:scaleX(1.0207);text-decoration:underline;text-underline-offset:1px;text-decoration-color:#58acd9;">Office AP</div>
<div class="t" style="left:466.50px;top:375.71px;font-size:8.38px;color:#333;">97%</div>
<svg class="r" style="left:494px;top:373.1px" width="13" height="13"><circle cx="6.5" cy="6.5" r="6.4" fill="#9d4ec6"/><text x="6.6" y="9.3" font-family="Liberation Sans" font-style="italic" font-size="8" fill="#fff" text-anchor="middle">n</text></svg>
<div class="t" style="left:520.20px;top:375.71px;font-size:8.38px;color:#333;">1.80M</div>
<div class="t" style="left:562.50px;top:375.71px;font-size:8.38px;color:#333;">5.64M</div>
<div class="t" style="left:647.70px;top:375.71px;font-size:8.38px;color:#333;transform:scaleX(1.0350);">2h 55m</div>
<div class="r" style="left:722px;top:370.4px;width:69.0px;height:18.2px;border:1px solid #b3b3b3;border-radius:2px;box-sizing:border-box;background:linear-gradient(#f0f0f0,#e3e3e3);box-shadow:0 0.5px 1px rgba(0,0,0,0.15);"></div>
<svg class="r" style="left:735.8px;top:375.8px" width="8" height="8"><path d="M0.8 0.8 L7 7 M7 0.8 L0.8 7" stroke="#2d96d3" stroke-width="1.7"/></svg>
<div class="t" style="left:748.20px;top:376.38px;font-size:7.82px;color:#4f4f4f;font-weight:bold;transform:scaleX(0.8919);">BLOCK</div>
<div class="r" style="left:794px;top:370.4px;width:71.0px;height:18.2px;border:1px solid #b3b3b3;border-radius:2px;box-sizing:border-box;background:linear-gradient(#f0f0f0,#e3e3e3);box-shadow:0 0.5px 1px rgba(0,0,0,0.15);"></div>
<svg class="r" style="left:798.5px;top:376.8px" width="10" height="6"><path d="M1.5 2.8 H8.5 M3 1 L1 2.8 L3 4.6 M7 1 L9 2.8 L7 4.6" fill="none" stroke="#7cc3e8" stroke-width="0.9"/></svg>
<div class="t" style="left:810.50px;top:376.38px;font-size:7.82px;color:#4f4f4f;font-weight:bold;transform:scaleX(0.9165);">RECONNECT</div>
<div class="r" style="left:112.5px;top:420px;width:852.5px;height:1px;background:#d9d9d9;"></div>
<div class="t" style="left:119.80px;top:402.51px;font-size:8.38px;color:#2f90cf;transform:scaleX(1.0305);text-decoration:underline;text-underline-offset:1px;text-decoration-color:#58acd9;">Skynet</div>
<div class="t" style="left:220.20px;top:402.51px;font-size:8.38px;color:#333;">10.10.10.116</div>
<div class="t" style="left:281.30px;top:402.51px;font-size:8.38px;color:#333;transform:scaleX(0.9557);">JADE_HELM_COMMAND</div>
<div class="t" style="left:388.00px;top:402.51px;font-size:8.38px;color:#2f90cf;transform:scaleX(1.0207);text-decoration:underline;text-underline-offset:1px;text-decoration-color:#58acd9;">Office AP</div>
<div class="t" style="left:466.50px;top:402.51px;font-size:8.38px;color:#333;">84%</div>
<svg class="r" style="left:494px;top:399.9px" width="13" height="13"><circle cx="6.5" cy="6.5" r="6.4" fill="#9d4ec6"/><text x="6.6" y="9.3" font-family="Liberation Sans" font-style="italic" font-size="8" fill="#fff" text-anchor="middle">n</text></svg>
<div class="t" style="left:520.20px;top:402.51px;font-size:8.38px;color:#333;">43.5G</div>
<div class="t" style="left:562.50px;top:402.51px;font-size:8.38px;color:#333;">22.9G</div>
<div class="r" style="left:596.2px;top:400.3px;width:6px;height:12px;background:#17c017;"></div>
<div class="t" style="left:647.70px;top:402.51px;font-size:8.38px;color:#333;transform:scaleX(1.0350);">2d 19h 27m 36s</div>
<div class="r" style="left:722px;top:397.2px;width:69.0px;height:18.2px;border:1px solid #b3b3b3;border-radius:2px;box-sizing:border-box;background:linear-gradient(#f0f0f0,#e3e3e3);box-shadow:0 0.5px 1px rgba(0,0,0,0.15);"></div>
<svg class="r" style="left:735.8px;top:402.6px" width="8" height="8"><path d="M0.8 0.8 L7 7 M7 0.8 L0.8 7" stroke="#2d96d3" stroke-width="1.7"/></svg>
<div class="t" style="left:748.20px;top:403.18px;font-size:7.82px;color:#4f4f4f;font-weight:bold;transform:scaleX(0.8919);">BLOCK</div>
<div class="r" style="left:794px;top:397.2px;width:71.0px;height:18.2px;border:1px solid #b3b3b3;border-radius:2px;box-sizing:border-box;background:linear-gradient(#f0f0f0,#e3e3e3);box-shadow:0 0.5px 1px rgba(0,0,0,0.15);"></div>
<svg class="r" style="left:798.5px;top:403.6px" width="10" height="6"><path d="M1.5 2.8 H8.5 M3 1 L1 2.8 L3 4.6 M7 1 L9 2.8 L7 4.6" fill="none" stroke="#7cc3e8" stroke-width="0.9"/></svg>
<div class="t" style="left:810.50px;top:403.18px;font-size:7.82px;color:#4f4f4f;font-weight:bold;transform:scaleX(0.9165);">RECONNECT</div>
<div class="t" style="left:119.80px;top:429.31px;font-size:8.38px;color:#2f90cf;transform:scaleX(0.9709);text-decoration:underline;text-underline-offset:1px;text-decoration-color:#58acd9;">T-Rex</div>
<div class="t" style="left:220.20px;top:429.31px;font-size:8.38px;color:#333;">10.10.10.210</div>
<div class="t" style="left:281.30px;top:429.31px;font-size:8.38px;color:#333;transform:scaleX(0.9557);">JADE_HELM_COMMAND</div>
<div class="t" style="left:388.00px;top:429.31px;font-size:8.38px;color:#2f90cf;transform:scaleX(1.0207);text-decoration:underline;text-underline-offset:1px;text-decoration-color:#58acd9;">Office AP</div>
<div class="t" style="left:466.50px;top:429.31px;font-size:8.38px;color:#333;">99%</div>
<svg class="r" style="left:494px;top:426.7px" width="13" height="13"><circle cx="6.5" cy="6.5" r="6.4" fill="#9d4ec6"/><text x="6.6" y="9.3" font-family="Liberation Sans" font-style="italic" font-size="7" fill="#fff" text-anchor="middle">ac</text></svg>
<div class="t" style="left:520.20px;top:429.31px;font-size:8.38px;color:#333;">577K</div>
<div class="t" style="left:562.50px;top:429.31px;font-size:8.38px;color:#333;">1.35M</div>
<div class="t" style="left:647.70px;top:429.31px;font-size:8.38px;color:#333;transform:scaleX(1.0350);">1d 22h 8m 16s</div>
<div class="r" style="left:722px;top:424.0px;width:69.0px;height:18.2px;border:1px solid #b3b3b3;border-radius:2px;box-sizing:border-box;background:linear-gradient(#f0f0f0,#e3e3e3);box-shadow:0 0.5px 1px rgba(0,0,0,0.15);"></div>
<svg class="r" style="left:735.8px;top:429.4px" width="8" height="8"><path d="M0.8 0.8 L7 7 M7 0.8 L0.8 7" stroke="#2d96d3" stroke-width="1.7"/></svg>
<div class="t" style="left:748.20px;top:429.98px;font-size:7.82px;color:#4f4f4f;font-weight:bold;transform:scaleX(0.8919);">BLOCK</div>
<div class="r" style="left:794px;top:424.0px;width:71.0px;height:18.2px;border:1px solid #b3b3b3;border-radius:2px;box-sizing:border-box;background:linear-gradient(#f0f0f0,#e3e3e3);box-shadow:0 0.5px 1px rgba(0,0,0,0.15);"></div>
<svg class="r" style="left:798.5px;top:430.4px" width="10" height="6"><path d="M1.5 2.8 H8.5 M3 1 L1 2.8 L3 4.6 M7 1 L9 2.8 L7 4.6" fill="none" stroke="#7cc3e8" stroke-width="0.9"/></svg>
<div class="t" style="left:810.50px;top:429.98px;font-size:7.82px;color:#4f4f4f;font-weight:bold;transform:scaleX(0.9165);">RECONNECT</div>
</body></html>
